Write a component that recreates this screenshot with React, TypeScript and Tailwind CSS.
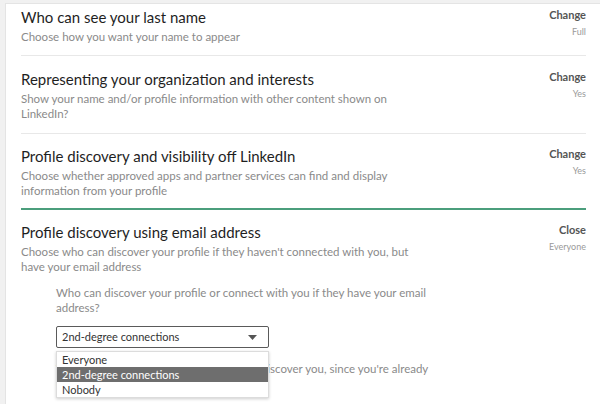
import React from 'react';

interface RowProps {
  title: string;
  desc: string;
  action: string;
  value: string;
  className?: string;
}

function SettingRow({ title, desc, action, value, className }: RowProps) {
  return (
    <div className={`flex justify-between ${className ?? ''}`}>
      <div className="w-[398px]">
        <h3 className="text-[15px] leading-[20px] text-[#1f1f1f]">{title}</h3>
        <p className="mt-[2px] text-[11.5px] leading-[15px] text-[#8a8a8a]">{desc}</p>
      </div>
      <div className="flex flex-col items-end pt-[1px]">
        <span className="text-[11px] font-bold leading-[14px] text-[#555]">{action}</span>
        <span className="mt-[4px] text-[9px] leading-[12px] text-[#9a9a9a]">{value}</span>
      </div>
    </div>
  );
}

const OPTIONS = ['Everyone', '2nd-degree connections', 'Nobody'];

export default function App() {
  return (
    <div
      className="h-[404px] w-[600px] overflow-hidden bg-[#f1f1f1] pl-[5px] pt-[3px]"
      style={{ fontFamily: 'Lato, "Open Sans", sans-serif' }}
    >
      <div className="h-full border-l border-t border-[#e4e4e4] bg-white pl-[15px] pr-[14px]">
        {/* collapsed settings */}
        <SettingRow
          className="border-b border-[#e8e8e8] pb-[11px] pt-[3px]"
          title="Who can see your last name"
          desc="Choose how you want your name to appear"
          action="Change"
          value="Full"
        />
        <SettingRow
          className="border-b border-[#e8e8e8] pb-[12px] pt-[13px]"
          title="Representing your organization and interests"
          desc="Show your name and/or profile information with other content shown on LinkedIn?"
          action="Change"
          value="Yes"
        />
        <SettingRow
          className="border-b-2 border-[#4b9e7c] pb-[10px] pt-[12px]"
          title="Profile discovery and visibility off LinkedIn"
          desc="Choose whether approved apps and partner services can find and display information from your profile"
          action="Change"
          value="Yes"
        />

        {/* expanded section */}
        <div className="pt-[12px]">
          <SettingRow
            title="Profile discovery using email address"
            desc="Choose who can discover your profile if they haven't connected with you, but have your email address"
            action="Close"
            value="Everyone"
          />
          <div className="pl-[35px] pt-[11px]">
            <p className="w-[380px] text-[11.5px] leading-[15px] text-[#8a8a8a]">
              Who can discover your profile or connect with you if they have your email address?
            </p>
            <div className="relative mt-[11px] w-[213px]">
              <div className="flex h-[22px] items-center justify-between rounded-[2px] border border-[#5a5a5a] pl-[5px] pr-[11px]">
                <span className="text-[11px] text-[#333]">2nd-degree connections</span>
                <svg width="9" height="5" viewBox="0 0 9 5">
                  <path d="M0 0h9L4.5 5z" fill="#555" />
                </svg>
              </div>
              <p className="mt-[13px] w-[380px] text-[11.5px] leading-[15px] text-[#8a8a8a]">
                Your 1st-degree connections can always discover you, since you're already connected
              </p>
              <ul className="absolute left-0 top-[25px] w-[213px] border border-[#dcdcdc] bg-white shadow-[0_1px_3px_rgba(0,0,0,0.2)]">
                {OPTIONS.map((opt) => (
                  <li
                    key={opt}
                    className={`h-[15px] pl-[5px] text-[11px] leading-[15px] ${
                      opt === '2nd-degree connections' ? 'bg-[#6e6e6e] text-white' : 'text-[#333]'
                    }`}
                  >
                    {opt}
                  </li>
                ))}
              </ul>
            </div>
          </div>
        </div>
      </div>
    </div>
  );
}
